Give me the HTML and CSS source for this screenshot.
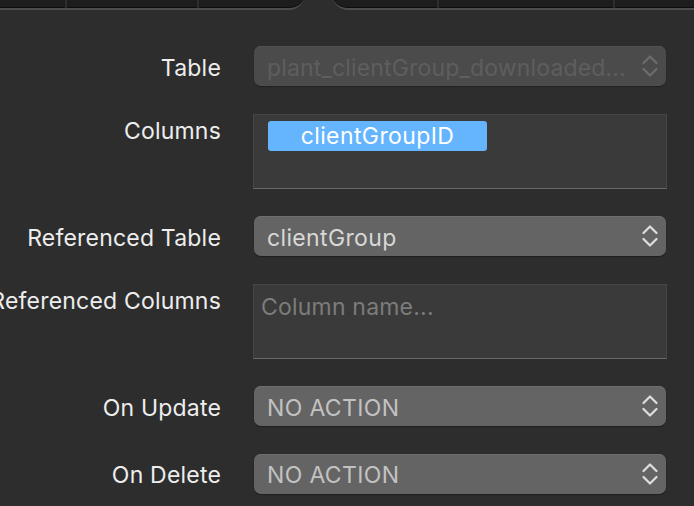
FILE: index.html
```html
<!DOCTYPE html>
<html>
<head>
<meta charset="utf-8">
<link rel="stylesheet" href="styles.css">
</head>
<body>
<div class="chrome">
  <div class="tabbar tabbar-left">
    <span class="seg seg-a"></span><span class="seg seg-b"></span><span class="seg seg-c"></span>
  </div>
  <div class="tabbar tabbar-right">
    <span class="seg seg-d"></span><span class="seg seg-e"></span><span class="seg seg-f"></span>
  </div>
</div>

<div class="form">
  <div class="label center">Table</div>
  <div class="popup disabled">
    <span class="popup-text">plant_clientGroup_downloaded...</span>
    <svg class="chev" viewBox="0 0 16 24" width="16" height="24"><path d="M1.5 9 L8 2.5 L14.5 9 M1.5 15 L8 21.5 L14.5 15" fill="none" stroke="currentColor" stroke-width="2.2" stroke-linecap="round" stroke-linejoin="round"/></svg>
  </div>

  <div class="label top">Columns</div>
  <div class="box">
    <span class="token">clientGroupID</span>
  </div>

  <div class="label center">Referenced Table</div>
  <div class="popup">
    <span class="popup-text">clientGroup</span>
    <svg class="chev" viewBox="0 0 16 24" width="16" height="24"><path d="M1.5 9 L8 2.5 L14.5 9 M1.5 15 L8 21.5 L14.5 15" fill="none" stroke="currentColor" stroke-width="2.2" stroke-linecap="round" stroke-linejoin="round"/></svg>
  </div>

  <div class="label top">Referenced Columns</div>
  <div class="box">
    <span class="placeholder">Column name...</span>
  </div>

  <div class="label center">On Update</div>
  <div class="popup">
    <span class="popup-text dim">NO ACTION</span>
    <svg class="chev" viewBox="0 0 16 24" width="16" height="24"><path d="M1.5 9 L8 2.5 L14.5 9 M1.5 15 L8 21.5 L14.5 15" fill="none" stroke="currentColor" stroke-width="2.2" stroke-linecap="round" stroke-linejoin="round"/></svg>
  </div>

  <div class="label center">On Delete</div>
  <div class="popup">
    <span class="popup-text dim">NO ACTION</span>
    <svg class="chev" viewBox="0 0 16 24" width="16" height="24"><path d="M1.5 9 L8 2.5 L14.5 9 M1.5 15 L8 21.5 L14.5 15" fill="none" stroke="currentColor" stroke-width="2.2" stroke-linecap="round" stroke-linejoin="round"/></svg>
  </div>
</div>
</body>
</html>
```

FILE: styles.css
```css
html, body {
  margin: 0;
  padding: 0;
  background: #2d2d2d;
  width: 694px;
  height: 506px;
  overflow: hidden;
  font-family: "Inter", "Liberation Sans", sans-serif;
}

.chrome {
  height: 10px;
  display: flex;
  justify-content: space-between;
  align-items: flex-end;
  overflow: hidden;
}

.tabbar {
  height: 30px;
  flex: none;
  background: #1d1d1d;
  border-bottom: 2px solid #4c4c4c;
  box-shadow: inset 0 -1px 0 #0c0c0c;
  display: flex;
}

.tabbar-left {
  width: 305px;
  border-bottom-right-radius: 16px;
}

.tabbar-right {
  width: 362px;
  border-bottom-left-radius: 16px;
}

.seg {
  display: block;
  height: 100%;
  border-right: 2px solid #2c2c2c;
}

.seg-a { width: 65px; }
.seg-b { width: 130px; }
.seg-c { flex: 1; border-right: none; }
.seg-d { width: 105px; }
.seg-e { width: 174px; }
.seg-f { flex: 1; border-right: none; }

.form {
  display: grid;
  grid-template-columns: 221px 412px;
  column-gap: 33px;
  row-gap: 27.6px;
  grid-template-rows: 40px 75px 40px 75px 40px 40px;
  padding-top: 36px;
}

.label {
  display: flex;
  justify-content: flex-end;
  white-space: nowrap;
  color: #ededed;
  font-size: 23px;
  letter-spacing: 0.2px;
  line-height: 26px;
}

.label.center { align-self: center; padding-top: 3px; }
.label.top { align-self: start; padding-top: 4px; }

.popup {
  display: flex;
  align-items: center;
  justify-content: space-between;
  height: 40px;
  box-sizing: border-box;
  padding: 0 8px 0 13px;
  border-radius: 7px;
  background: #646464;
  box-shadow: inset 0 1px 0 #6e6e6e, 0 1px 1px rgba(0,0,0,0.35);
  color: #d8d8d8;
  font-size: 23px;
  letter-spacing: 0.35px;
}

.popup-text {
  padding-top: 3px;
}

.popup.disabled {
  background: #4b4b4b;
  box-shadow: inset 0 1px 0 #515151, 0 1px 1px rgba(0,0,0,0.25);
  color: #5e5e5e;
  letter-spacing: 0.15px;
}

.popup-text.dim { color: #c2c2c2; }

.chev {
  flex: none;
  color: #dedede;
}

.popup.disabled .chev { color: #6c6c6c; }

.box {
  margin-left: -1px;
  width: 414px;
  box-sizing: border-box;
  background: #3a3a3a;
  border: 1px solid #474747;
  border-bottom: 1px solid #6a6a6a;
  padding: 6px 0 0 14px;
  display: flex;
  align-items: flex-start;
}

.token {
  width: 219px;
  height: 30px;
  border-radius: 3px;
  background: #64b4fe;
  color: #ffffff;
  font-size: 23px;
  letter-spacing: 0.4px;
  line-height: 30px;
  text-align: center;
}

.placeholder {
  margin-left: -7px;
  margin-top: 3px;
  color: #7c7c7c;
  font-size: 23px;
  letter-spacing: 0.2px;
  line-height: 26px;
}
```
